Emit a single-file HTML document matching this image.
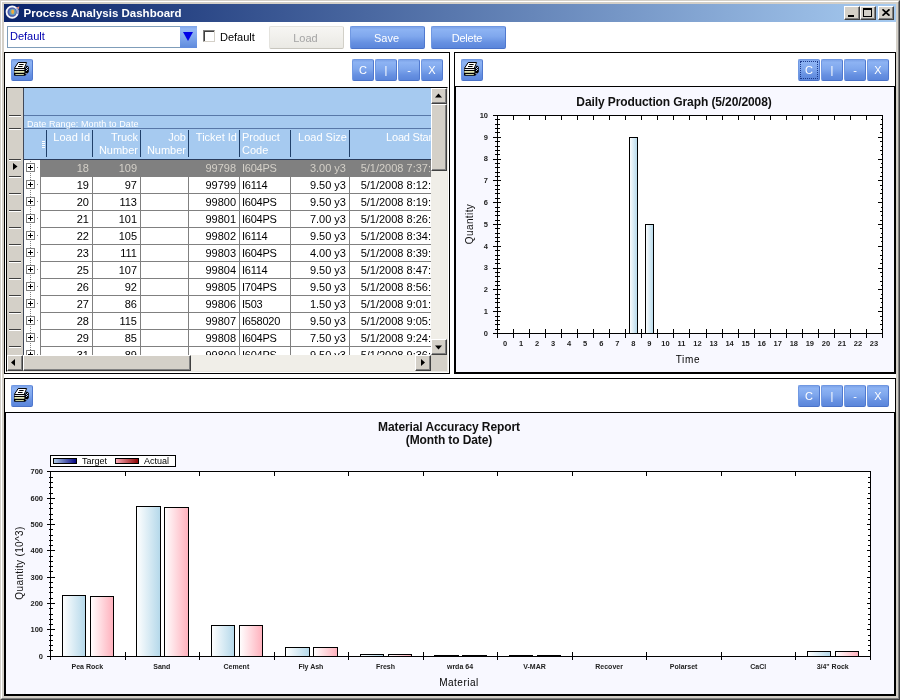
<!DOCTYPE html><html><head><meta charset="utf-8"><title>Process Analysis Dashboard</title><style>
html,body{margin:0;padding:0;}
html{background:#d4d0c8;}
body{will-change:transform;}
body{width:900px;height:700px;overflow:hidden;background:#d4d0c8;position:relative;font-family:"Liberation Sans",sans-serif;font-size:11px;color:#000;}
.a{position:absolute;}
.t{position:absolute;white-space:nowrap;line-height:1;}
#frame{left:0;top:0;width:900px;height:700px;background:#d4d0c8;box-sizing:border-box;border:1px solid;border-color:#d4d0c8 #404040 #404040 #d4d0c8;}
#frame2{left:1px;top:1px;width:898px;height:698px;box-sizing:border-box;border:1px solid;border-color:#fff #808080 #808080 #fff;}
#title{left:4px;top:4px;width:892px;height:18px;background:linear-gradient(to right,#0a246a 0%,#a6caf0 100%);}
#client{left:4px;top:22px;width:892px;height:674px;background:#fff;}
.tb{position:absolute;width:16px;height:14px;box-sizing:border-box;background:#d4d0c8;border:1px solid;border-color:#fff #404040 #404040 #fff;box-shadow:inset -1px -1px 0 #808080;}
.btn{position:absolute;box-sizing:border-box;border-radius:2px;background:linear-gradient(to bottom,#7da3e8 0%,#8db3f3 12%,#7fa7ed 45%,#6690e1 75%,#5b86db 100%);color:#fff;text-align:center;border:1px solid;border-color:#7098e2 #5079cf #4a72c8 #7098e2;}
.sb{position:absolute;box-sizing:border-box;background:#d4d0c8;border:1px solid;border-color:#fff #404040 #404040 #fff;box-shadow:inset -1px -1px 0 #808080;}
.hl{position:absolute;height:1px;background:#808080;}
.vl{position:absolute;width:1px;background:#808080;}
.cell{position:absolute;white-space:nowrap;font-size:11px;line-height:16px;height:16px;overflow:hidden;}
.r{text-align:right;}
.hd{position:absolute;white-space:nowrap;font-size:11px;line-height:13px;color:#fff;}
svg text{font-family:"Liberation Sans",sans-serif;}
</style></head><body>
<div class="a" id="frame"></div><div class="a" id="frame2"></div>
<div class="a" id="title"></div>
<svg class="a" style="left:4px;top:4px" width="18" height="18" viewBox="0 0 18 18"><path d="M12.6 3.2 L15.4 2.6 L14.6 5.4 Z" fill="#e08a78"/><circle cx="8.3" cy="8.1" r="4.6" fill="#4c5cb0"/><circle cx="8.6" cy="8" r="3.3" fill="#64a0b8"/><ellipse cx="8.7" cy="7.8" rx="1.5" ry="2.3" fill="#f4ac3c"/><circle cx="8.2" cy="8.1" r="5.6" fill="none" stroke="#f4f4fa" stroke-width="1.9"/><path d="M12.4 4.4 A5.6 5.6 0 0 1 13.6 10" fill="none" stroke="#4c5cb0" stroke-width="1.2" opacity="0.55"/></svg>
<div class="t" style="left:23.5px;top:8px;font-size:11.5px;font-weight:bold;color:#fff;letter-spacing:0px" id="ttl">Process Analysis Dashboard</div>
<div class="tb" style="left:844px;top:6px"><div class="a" style="left:3px;top:8px;width:6px;height:2px;background:#000"></div></div>
<div class="tb" style="left:860px;top:6px"><div class="a" style="left:2px;top:1px;width:9px;height:9px;box-sizing:border-box;border:1px solid #000;border-top-width:2px"></div></div>
<div class="tb" style="left:878px;top:6px"><svg class="a" style="left:3px;top:2px" width="9" height="7" viewBox="0 0 9 7"><path d="M0.5 0.3 L7.5 6.7 M7.5 0.3 L0.5 6.7" stroke="#000" stroke-width="1.7"/></svg></div>
<div class="a" id="client"></div>
<div class="a" style="left:7px;top:26px;width:190px;height:22px;box-sizing:border-box;border:1px solid #7f9db9;background:#fff"></div>
<div class="t" style="left:10px;top:31px;font-size:11px;color:#0000b0">Default</div>
<div class="a" style="left:180px;top:26px;width:17px;height:22px;background:linear-gradient(to bottom,#7da3e8 0%,#95b8f4 14%,#7fa7ed 50%,#5f8adc 100%);"></div>
<svg class="a" style="left:183px;top:32px" width="10" height="9" viewBox="0 0 10 9"><path d="M0 0 H10 L5 9 Z" fill="#0000e6"/></svg>
<div class="a" style="left:203px;top:30px;width:12px;height:12px;box-sizing:border-box;background:#fff;border:1px solid;border-color:#808080 #d4d0c8 #d4d0c8 #808080;box-shadow:inset 1px 1px 0 #404040"></div>
<div class="t" style="left:220px;top:32px;font-size:11px">Default</div>
<div class="a" style="left:269px;top:26px;width:75px;height:23px;box-sizing:border-box;border-radius:2px;background:linear-gradient(to bottom,#f7f6f3,#eae9e4);border:1px solid;border-color:#e4e3de #d2d0c8 #c8c6be #e4e3de;color:#a4a4a4;text-align:center;line-height:22px;font-size:11px;padding-right:2px">Load</div>
<div class="btn" style="left:350px;top:26px;width:75px;height:23px;line-height:22px;font-size:11px;padding-right:2px">Save</div>
<div class="btn" style="left:431px;top:26px;width:75px;height:23px;line-height:22px;font-size:11px;padding-right:3px;letter-spacing:-0.2px">Delete</div>
<div class="a" style="left:4px;top:52px;width:446px;height:322px;box-sizing:border-box;border:1px solid #000;background:#fff"></div>
<div class="btn" style="left:11px;top:59px;width:22px;height:22px"><svg class="a" style="left:-1px;top:-1px" width="22" height="22" viewBox="0 0 22 22"><path d="M3.6 9 L7.2 3.5 H15.6 L13.4 9" fill="#fff" stroke="#000" stroke-width="1"/><path d="M8.2 5.5 H12.6 M7 7.5 H11.6" stroke="#000" stroke-width="1"/><path d="M14.2 9 L15.8 6.3 L17.8 8 V13 L14.2 16.6 Z" fill="#000"/><rect x="3" y="9" width="11.6" height="7.8" rx="0.8" fill="#000"/><rect x="3.6" y="10" width="9.8" height="1" fill="#e4e6ea"/><rect x="3.4" y="12" width="10" height="1.8" fill="#e2e6b4"/><rect x="4.4" y="15" width="8.4" height="0.9" fill="#dfe6a6"/><rect x="15" y="9" width="1" height="1" fill="#b8c8f0"/><rect x="16" y="10" width="1" height="1" fill="#b8c8f0"/><rect x="15" y="11" width="1" height="1" fill="#b8c8f0"/><rect x="16" y="8" width="1" height="1" fill="#b8c8f0"/><rect x="14.6" y="14" width="1" height="1" fill="#dfe6f8"/></svg></div>
<div class="btn" style="left:352px;top:59px;width:22px;height:22px;line-height:20px;font-size:11px">C</div>
<div class="btn" style="left:375px;top:59px;width:22px;height:22px;line-height:20px;font-size:11px">|</div>
<div class="btn" style="left:398px;top:59px;width:22px;height:22px;line-height:20px;font-size:11px">-</div>
<div class="btn" style="left:421px;top:59px;width:22px;height:22px;line-height:20px;font-size:11px">X</div>
<div class="a" style="left:6px;top:87px;width:442px;height:285px;box-sizing:border-box;border:1px solid;border-color:#000 #eceae4 #eceae4 #000;background:#fff;overflow:hidden" id="grid">
<div class="a" style="left:0;top:0;width:16px;height:268px;background:#d4d0c8"></div><div class="a" style="left:16px;top:0;width:1px;height:268px;background:#404858"></div>
<div class="a" style="left:17px;top:0;width:407px;height:72px;background:#a6caf0"></div>
<div class="a" style="left:17px;top:27px;width:407px;height:1px;background:#5878a8"></div>
<div class="a" style="left:17px;top:40px;width:407px;height:1px;background:#5878a8"></div>
<div class="a" style="left:17px;top:71px;width:407px;height:1px;background:#2a3c5c"></div>
<div class="t" style="left:20px;top:32px;font-size:9px;color:#fff;letter-spacing:0.08px">Date Range: Month to Date</div>
<div class="a" style="left:39px;top:42px;width:1px;height:27px;background:#20406a"></div>
<div class="a" style="left:85px;top:42px;width:1px;height:27px;background:#20406a"></div>
<div class="a" style="left:133px;top:42px;width:1px;height:27px;background:#20406a"></div>
<div class="a" style="left:181px;top:42px;width:1px;height:27px;background:#20406a"></div>
<div class="a" style="left:232px;top:42px;width:1px;height:27px;background:#20406a"></div>
<div class="a" style="left:283px;top:42px;width:1px;height:27px;background:#20406a"></div>
<div class="a" style="left:342px;top:42px;width:1px;height:27px;background:#20406a"></div>
<div class="a" style="left:35px;top:53px;width:3px;height:1px;background:#fff;box-shadow:0 2px 0 #fff,0 4px 0 #fff,0 6px 0 #fff"></div>
<div class="hd" style="left:41px;top:43px;width:42px;text-align:right;">Load Id</div>
<div class="hd" style="left:87px;top:43px;width:44px;text-align:right;">Truck<br>Number</div>
<div class="hd" style="left:135px;top:43px;width:44px;text-align:right;">Job<br>Number</div>
<div class="hd" style="left:183px;top:43px;width:47px;text-align:right;">Ticket Id</div>
<div class="hd" style="left:235px;top:43px;width:46px;text-align:left;">Product<br>Code</div>
<div class="hd" style="left:285px;top:43px;width:55px;text-align:right;">Load Size</div>
<div class="hd" style="left:344px;top:43px;width:81px;text-align:right;"><span style="letter-spacing:-0.2px">Load Star</span></div>
<div class="a" style="left:2px;top:27px;width:12px;height:1px;background:#404040;box-shadow:0 1px 0 #fff"></div>
<div class="a" style="left:2px;top:40px;width:12px;height:1px;background:#404040;box-shadow:0 1px 0 #fff"></div>
<div class="a" style="left:2px;top:71px;width:12px;height:1px;background:#404040;box-shadow:0 1px 0 #fff"></div>
<div class="a" style="left:33px;top:72px;width:391px;height:17px;background:#808080"></div>
<div class="cell r" style="left:33px;top:72px;width:52px;box-sizing:border-box;padding-right:3px;color:#d4d0c8;">18</div>
<div class="cell r" style="left:86px;top:72px;width:47px;box-sizing:border-box;padding-right:3px;color:#d4d0c8;">109</div>
<div class="cell r" style="left:134px;top:72px;width:47px;box-sizing:border-box;padding-right:3px;color:#d4d0c8;"></div>
<div class="cell r" style="left:182px;top:72px;width:50px;box-sizing:border-box;padding-right:3px;color:#d4d0c8;">99798</div>
<div class="cell " style="left:233px;top:72px;width:50px;box-sizing:border-box;padding-left:2px;color:#d4d0c8;letter-spacing:-0.25px;">I604PS</div>
<div class="cell r" style="left:284px;top:72px;width:58px;box-sizing:border-box;padding-right:3px;color:#d4d0c8;">3.00 y3</div>
<div class="cell r" style="left:343px;top:72px;width:84px;box-sizing:border-box;padding-right:3px;color:#d4d0c8;">5/1/2008 7:37:</div>
<div class="hl" style="left:33px;top:88px;width:391px"></div>
<div class="a" style="left:2px;top:88px;width:12px;height:1px;background:#404040;box-shadow:0 1px 0 #fff"></div>
<div class="a" style="left:19px;top:75px;width:9px;height:9px;box-sizing:border-box;border:1px solid #808080;background:#fff"><div class="a" style="left:1px;top:3px;width:5px;height:1px;background:#000"></div><div class="a" style="left:3px;top:1px;width:1px;height:5px;background:#000"></div></div>
<div class="a" style="left:23px;top:85px;width:1px;height:1px;background:#808080;box-shadow:0 2px 0 #808080,0 4px 0 #808080,0 6px 0 #808080"></div>
<div class="a" style="left:30px;top:79px;width:1px;height:1px;background:#808080"></div>
<div class="cell r" style="left:33px;top:89px;width:52px;box-sizing:border-box;padding-right:3px;">19</div>
<div class="cell r" style="left:86px;top:89px;width:47px;box-sizing:border-box;padding-right:3px;">97</div>
<div class="cell r" style="left:134px;top:89px;width:47px;box-sizing:border-box;padding-right:3px;"></div>
<div class="cell r" style="left:182px;top:89px;width:50px;box-sizing:border-box;padding-right:3px;">99799</div>
<div class="cell " style="left:233px;top:89px;width:50px;box-sizing:border-box;padding-left:2px;letter-spacing:-0.25px;">I6114</div>
<div class="cell r" style="left:284px;top:89px;width:58px;box-sizing:border-box;padding-right:3px;">9.50 y3</div>
<div class="cell r" style="left:343px;top:89px;width:84px;box-sizing:border-box;padding-right:3px;">5/1/2008 8:12:</div>
<div class="hl" style="left:33px;top:105px;width:391px"></div>
<div class="a" style="left:2px;top:105px;width:12px;height:1px;background:#404040;box-shadow:0 1px 0 #fff"></div>
<div class="a" style="left:19px;top:92px;width:9px;height:9px;box-sizing:border-box;border:1px solid #808080;background:#fff"><div class="a" style="left:1px;top:3px;width:5px;height:1px;background:#000"></div><div class="a" style="left:3px;top:1px;width:1px;height:5px;background:#000"></div></div>
<div class="a" style="left:23px;top:102px;width:1px;height:1px;background:#808080;box-shadow:0 2px 0 #808080,0 4px 0 #808080,0 6px 0 #808080"></div>
<div class="a" style="left:30px;top:96px;width:1px;height:1px;background:#808080"></div>
<div class="cell r" style="left:33px;top:106px;width:52px;box-sizing:border-box;padding-right:3px;">20</div>
<div class="cell r" style="left:86px;top:106px;width:47px;box-sizing:border-box;padding-right:3px;">113</div>
<div class="cell r" style="left:134px;top:106px;width:47px;box-sizing:border-box;padding-right:3px;"></div>
<div class="cell r" style="left:182px;top:106px;width:50px;box-sizing:border-box;padding-right:3px;">99800</div>
<div class="cell " style="left:233px;top:106px;width:50px;box-sizing:border-box;padding-left:2px;letter-spacing:-0.25px;">I604PS</div>
<div class="cell r" style="left:284px;top:106px;width:58px;box-sizing:border-box;padding-right:3px;">9.50 y3</div>
<div class="cell r" style="left:343px;top:106px;width:84px;box-sizing:border-box;padding-right:3px;">5/1/2008 8:19:</div>
<div class="hl" style="left:33px;top:122px;width:391px"></div>
<div class="a" style="left:2px;top:122px;width:12px;height:1px;background:#404040;box-shadow:0 1px 0 #fff"></div>
<div class="a" style="left:19px;top:109px;width:9px;height:9px;box-sizing:border-box;border:1px solid #808080;background:#fff"><div class="a" style="left:1px;top:3px;width:5px;height:1px;background:#000"></div><div class="a" style="left:3px;top:1px;width:1px;height:5px;background:#000"></div></div>
<div class="a" style="left:23px;top:119px;width:1px;height:1px;background:#808080;box-shadow:0 2px 0 #808080,0 4px 0 #808080,0 6px 0 #808080"></div>
<div class="a" style="left:30px;top:113px;width:1px;height:1px;background:#808080"></div>
<div class="cell r" style="left:33px;top:123px;width:52px;box-sizing:border-box;padding-right:3px;">21</div>
<div class="cell r" style="left:86px;top:123px;width:47px;box-sizing:border-box;padding-right:3px;">101</div>
<div class="cell r" style="left:134px;top:123px;width:47px;box-sizing:border-box;padding-right:3px;"></div>
<div class="cell r" style="left:182px;top:123px;width:50px;box-sizing:border-box;padding-right:3px;">99801</div>
<div class="cell " style="left:233px;top:123px;width:50px;box-sizing:border-box;padding-left:2px;letter-spacing:-0.25px;">I604PS</div>
<div class="cell r" style="left:284px;top:123px;width:58px;box-sizing:border-box;padding-right:3px;">7.00 y3</div>
<div class="cell r" style="left:343px;top:123px;width:84px;box-sizing:border-box;padding-right:3px;">5/1/2008 8:26:</div>
<div class="hl" style="left:33px;top:139px;width:391px"></div>
<div class="a" style="left:2px;top:139px;width:12px;height:1px;background:#404040;box-shadow:0 1px 0 #fff"></div>
<div class="a" style="left:19px;top:126px;width:9px;height:9px;box-sizing:border-box;border:1px solid #808080;background:#fff"><div class="a" style="left:1px;top:3px;width:5px;height:1px;background:#000"></div><div class="a" style="left:3px;top:1px;width:1px;height:5px;background:#000"></div></div>
<div class="a" style="left:23px;top:136px;width:1px;height:1px;background:#808080;box-shadow:0 2px 0 #808080,0 4px 0 #808080,0 6px 0 #808080"></div>
<div class="a" style="left:30px;top:130px;width:1px;height:1px;background:#808080"></div>
<div class="cell r" style="left:33px;top:140px;width:52px;box-sizing:border-box;padding-right:3px;">22</div>
<div class="cell r" style="left:86px;top:140px;width:47px;box-sizing:border-box;padding-right:3px;">105</div>
<div class="cell r" style="left:134px;top:140px;width:47px;box-sizing:border-box;padding-right:3px;"></div>
<div class="cell r" style="left:182px;top:140px;width:50px;box-sizing:border-box;padding-right:3px;">99802</div>
<div class="cell " style="left:233px;top:140px;width:50px;box-sizing:border-box;padding-left:2px;letter-spacing:-0.25px;">I6114</div>
<div class="cell r" style="left:284px;top:140px;width:58px;box-sizing:border-box;padding-right:3px;">9.50 y3</div>
<div class="cell r" style="left:343px;top:140px;width:84px;box-sizing:border-box;padding-right:3px;">5/1/2008 8:34:</div>
<div class="hl" style="left:33px;top:156px;width:391px"></div>
<div class="a" style="left:2px;top:156px;width:12px;height:1px;background:#404040;box-shadow:0 1px 0 #fff"></div>
<div class="a" style="left:19px;top:143px;width:9px;height:9px;box-sizing:border-box;border:1px solid #808080;background:#fff"><div class="a" style="left:1px;top:3px;width:5px;height:1px;background:#000"></div><div class="a" style="left:3px;top:1px;width:1px;height:5px;background:#000"></div></div>
<div class="a" style="left:23px;top:153px;width:1px;height:1px;background:#808080;box-shadow:0 2px 0 #808080,0 4px 0 #808080,0 6px 0 #808080"></div>
<div class="a" style="left:30px;top:147px;width:1px;height:1px;background:#808080"></div>
<div class="cell r" style="left:33px;top:157px;width:52px;box-sizing:border-box;padding-right:3px;">23</div>
<div class="cell r" style="left:86px;top:157px;width:47px;box-sizing:border-box;padding-right:3px;">111</div>
<div class="cell r" style="left:134px;top:157px;width:47px;box-sizing:border-box;padding-right:3px;"></div>
<div class="cell r" style="left:182px;top:157px;width:50px;box-sizing:border-box;padding-right:3px;">99803</div>
<div class="cell " style="left:233px;top:157px;width:50px;box-sizing:border-box;padding-left:2px;letter-spacing:-0.25px;">I604PS</div>
<div class="cell r" style="left:284px;top:157px;width:58px;box-sizing:border-box;padding-right:3px;">4.00 y3</div>
<div class="cell r" style="left:343px;top:157px;width:84px;box-sizing:border-box;padding-right:3px;">5/1/2008 8:39:</div>
<div class="hl" style="left:33px;top:173px;width:391px"></div>
<div class="a" style="left:2px;top:173px;width:12px;height:1px;background:#404040;box-shadow:0 1px 0 #fff"></div>
<div class="a" style="left:19px;top:160px;width:9px;height:9px;box-sizing:border-box;border:1px solid #808080;background:#fff"><div class="a" style="left:1px;top:3px;width:5px;height:1px;background:#000"></div><div class="a" style="left:3px;top:1px;width:1px;height:5px;background:#000"></div></div>
<div class="a" style="left:23px;top:170px;width:1px;height:1px;background:#808080;box-shadow:0 2px 0 #808080,0 4px 0 #808080,0 6px 0 #808080"></div>
<div class="a" style="left:30px;top:164px;width:1px;height:1px;background:#808080"></div>
<div class="cell r" style="left:33px;top:174px;width:52px;box-sizing:border-box;padding-right:3px;">25</div>
<div class="cell r" style="left:86px;top:174px;width:47px;box-sizing:border-box;padding-right:3px;">107</div>
<div class="cell r" style="left:134px;top:174px;width:47px;box-sizing:border-box;padding-right:3px;"></div>
<div class="cell r" style="left:182px;top:174px;width:50px;box-sizing:border-box;padding-right:3px;">99804</div>
<div class="cell " style="left:233px;top:174px;width:50px;box-sizing:border-box;padding-left:2px;letter-spacing:-0.25px;">I6114</div>
<div class="cell r" style="left:284px;top:174px;width:58px;box-sizing:border-box;padding-right:3px;">9.50 y3</div>
<div class="cell r" style="left:343px;top:174px;width:84px;box-sizing:border-box;padding-right:3px;">5/1/2008 8:47:</div>
<div class="hl" style="left:33px;top:190px;width:391px"></div>
<div class="a" style="left:2px;top:190px;width:12px;height:1px;background:#404040;box-shadow:0 1px 0 #fff"></div>
<div class="a" style="left:19px;top:177px;width:9px;height:9px;box-sizing:border-box;border:1px solid #808080;background:#fff"><div class="a" style="left:1px;top:3px;width:5px;height:1px;background:#000"></div><div class="a" style="left:3px;top:1px;width:1px;height:5px;background:#000"></div></div>
<div class="a" style="left:23px;top:187px;width:1px;height:1px;background:#808080;box-shadow:0 2px 0 #808080,0 4px 0 #808080,0 6px 0 #808080"></div>
<div class="a" style="left:30px;top:181px;width:1px;height:1px;background:#808080"></div>
<div class="cell r" style="left:33px;top:191px;width:52px;box-sizing:border-box;padding-right:3px;">26</div>
<div class="cell r" style="left:86px;top:191px;width:47px;box-sizing:border-box;padding-right:3px;">92</div>
<div class="cell r" style="left:134px;top:191px;width:47px;box-sizing:border-box;padding-right:3px;"></div>
<div class="cell r" style="left:182px;top:191px;width:50px;box-sizing:border-box;padding-right:3px;">99805</div>
<div class="cell " style="left:233px;top:191px;width:50px;box-sizing:border-box;padding-left:2px;letter-spacing:-0.25px;">I704PS</div>
<div class="cell r" style="left:284px;top:191px;width:58px;box-sizing:border-box;padding-right:3px;">9.50 y3</div>
<div class="cell r" style="left:343px;top:191px;width:84px;box-sizing:border-box;padding-right:3px;">5/1/2008 8:56:</div>
<div class="hl" style="left:33px;top:207px;width:391px"></div>
<div class="a" style="left:2px;top:207px;width:12px;height:1px;background:#404040;box-shadow:0 1px 0 #fff"></div>
<div class="a" style="left:19px;top:194px;width:9px;height:9px;box-sizing:border-box;border:1px solid #808080;background:#fff"><div class="a" style="left:1px;top:3px;width:5px;height:1px;background:#000"></div><div class="a" style="left:3px;top:1px;width:1px;height:5px;background:#000"></div></div>
<div class="a" style="left:23px;top:204px;width:1px;height:1px;background:#808080;box-shadow:0 2px 0 #808080,0 4px 0 #808080,0 6px 0 #808080"></div>
<div class="a" style="left:30px;top:198px;width:1px;height:1px;background:#808080"></div>
<div class="cell r" style="left:33px;top:208px;width:52px;box-sizing:border-box;padding-right:3px;">27</div>
<div class="cell r" style="left:86px;top:208px;width:47px;box-sizing:border-box;padding-right:3px;">86</div>
<div class="cell r" style="left:134px;top:208px;width:47px;box-sizing:border-box;padding-right:3px;"></div>
<div class="cell r" style="left:182px;top:208px;width:50px;box-sizing:border-box;padding-right:3px;">99806</div>
<div class="cell " style="left:233px;top:208px;width:50px;box-sizing:border-box;padding-left:2px;letter-spacing:-0.25px;">I503</div>
<div class="cell r" style="left:284px;top:208px;width:58px;box-sizing:border-box;padding-right:3px;">1.50 y3</div>
<div class="cell r" style="left:343px;top:208px;width:84px;box-sizing:border-box;padding-right:3px;">5/1/2008 9:01:</div>
<div class="hl" style="left:33px;top:224px;width:391px"></div>
<div class="a" style="left:2px;top:224px;width:12px;height:1px;background:#404040;box-shadow:0 1px 0 #fff"></div>
<div class="a" style="left:19px;top:211px;width:9px;height:9px;box-sizing:border-box;border:1px solid #808080;background:#fff"><div class="a" style="left:1px;top:3px;width:5px;height:1px;background:#000"></div><div class="a" style="left:3px;top:1px;width:1px;height:5px;background:#000"></div></div>
<div class="a" style="left:23px;top:221px;width:1px;height:1px;background:#808080;box-shadow:0 2px 0 #808080,0 4px 0 #808080,0 6px 0 #808080"></div>
<div class="a" style="left:30px;top:215px;width:1px;height:1px;background:#808080"></div>
<div class="cell r" style="left:33px;top:225px;width:52px;box-sizing:border-box;padding-right:3px;">28</div>
<div class="cell r" style="left:86px;top:225px;width:47px;box-sizing:border-box;padding-right:3px;">115</div>
<div class="cell r" style="left:134px;top:225px;width:47px;box-sizing:border-box;padding-right:3px;"></div>
<div class="cell r" style="left:182px;top:225px;width:50px;box-sizing:border-box;padding-right:3px;">99807</div>
<div class="cell " style="left:233px;top:225px;width:50px;box-sizing:border-box;padding-left:2px;letter-spacing:-0.25px;">I658020</div>
<div class="cell r" style="left:284px;top:225px;width:58px;box-sizing:border-box;padding-right:3px;">9.50 y3</div>
<div class="cell r" style="left:343px;top:225px;width:84px;box-sizing:border-box;padding-right:3px;">5/1/2008 9:05:</div>
<div class="hl" style="left:33px;top:241px;width:391px"></div>
<div class="a" style="left:2px;top:241px;width:12px;height:1px;background:#404040;box-shadow:0 1px 0 #fff"></div>
<div class="a" style="left:19px;top:228px;width:9px;height:9px;box-sizing:border-box;border:1px solid #808080;background:#fff"><div class="a" style="left:1px;top:3px;width:5px;height:1px;background:#000"></div><div class="a" style="left:3px;top:1px;width:1px;height:5px;background:#000"></div></div>
<div class="a" style="left:23px;top:238px;width:1px;height:1px;background:#808080;box-shadow:0 2px 0 #808080,0 4px 0 #808080,0 6px 0 #808080"></div>
<div class="a" style="left:30px;top:232px;width:1px;height:1px;background:#808080"></div>
<div class="cell r" style="left:33px;top:242px;width:52px;box-sizing:border-box;padding-right:3px;">29</div>
<div class="cell r" style="left:86px;top:242px;width:47px;box-sizing:border-box;padding-right:3px;">85</div>
<div class="cell r" style="left:134px;top:242px;width:47px;box-sizing:border-box;padding-right:3px;"></div>
<div class="cell r" style="left:182px;top:242px;width:50px;box-sizing:border-box;padding-right:3px;">99808</div>
<div class="cell " style="left:233px;top:242px;width:50px;box-sizing:border-box;padding-left:2px;letter-spacing:-0.25px;">I604PS</div>
<div class="cell r" style="left:284px;top:242px;width:58px;box-sizing:border-box;padding-right:3px;">7.50 y3</div>
<div class="cell r" style="left:343px;top:242px;width:84px;box-sizing:border-box;padding-right:3px;">5/1/2008 9:24:</div>
<div class="hl" style="left:33px;top:258px;width:391px"></div>
<div class="a" style="left:2px;top:258px;width:12px;height:1px;background:#404040;box-shadow:0 1px 0 #fff"></div>
<div class="a" style="left:19px;top:245px;width:9px;height:9px;box-sizing:border-box;border:1px solid #808080;background:#fff"><div class="a" style="left:1px;top:3px;width:5px;height:1px;background:#000"></div><div class="a" style="left:3px;top:1px;width:1px;height:5px;background:#000"></div></div>
<div class="a" style="left:23px;top:255px;width:1px;height:1px;background:#808080;box-shadow:0 2px 0 #808080,0 4px 0 #808080,0 6px 0 #808080"></div>
<div class="a" style="left:30px;top:249px;width:1px;height:1px;background:#808080"></div>
<div class="cell r" style="left:33px;top:259px;width:52px;box-sizing:border-box;padding-right:3px;">31</div>
<div class="cell r" style="left:86px;top:259px;width:47px;box-sizing:border-box;padding-right:3px;">89</div>
<div class="cell r" style="left:134px;top:259px;width:47px;box-sizing:border-box;padding-right:3px;"></div>
<div class="cell r" style="left:182px;top:259px;width:50px;box-sizing:border-box;padding-right:3px;">99809</div>
<div class="cell " style="left:233px;top:259px;width:50px;box-sizing:border-box;padding-left:2px;letter-spacing:-0.25px;">I604PS</div>
<div class="cell r" style="left:284px;top:259px;width:58px;box-sizing:border-box;padding-right:3px;">9.50 y3</div>
<div class="cell r" style="left:343px;top:259px;width:84px;box-sizing:border-box;padding-right:3px;">5/1/2008 9:36:</div>
<div class="hl" style="left:33px;top:275px;width:391px"></div>
<div class="a" style="left:2px;top:275px;width:12px;height:1px;background:#404040;box-shadow:0 1px 0 #fff"></div>
<div class="a" style="left:19px;top:262px;width:9px;height:9px;box-sizing:border-box;border:1px solid #808080;background:#fff"><div class="a" style="left:1px;top:3px;width:5px;height:1px;background:#000"></div><div class="a" style="left:3px;top:1px;width:1px;height:5px;background:#000"></div></div>
<div class="a" style="left:23px;top:272px;width:1px;height:1px;background:#808080;box-shadow:0 2px 0 #808080,0 4px 0 #808080,0 6px 0 #808080"></div>
<div class="a" style="left:30px;top:266px;width:1px;height:1px;background:#808080"></div>
<div class="a" style="left:23px;top:73px;width:1px;height:1px;background:#808080"></div>
<div class="vl" style="left:85px;top:88px;height:179px"></div>
<div class="vl" style="left:133px;top:88px;height:179px"></div>
<div class="vl" style="left:181px;top:88px;height:179px"></div>
<div class="vl" style="left:232px;top:88px;height:179px"></div>
<div class="vl" style="left:283px;top:88px;height:179px"></div>
<div class="vl" style="left:342px;top:88px;height:179px"></div>
<div class="vl" style="left:33px;top:88px;height:179px"></div>
<svg class="a" style="left:6px;top:75px" width="5" height="7" viewBox="0 0 5 7"><path d="M0 0 L4.5 3.5 L0 7 Z" fill="#000"/></svg>
<div class="a" style="left:424px;top:0;width:16px;height:267px;background:#f0eee8"></div>
<div class="sb" style="left:424px;top:0;width:16px;height:16px"><svg class="a" style="left:3px;top:4px" width="8" height="5" viewBox="0 0 8 5"><path d="M0 4.5 L3.5 0.5 L7 4.5 Z" fill="#000"/></svg></div>
<div class="sb" style="left:424px;top:16px;width:16px;height:67px"></div>
<div class="sb" style="left:424px;top:251px;width:16px;height:16px"><svg class="a" style="left:3px;top:5px" width="8" height="5" viewBox="0 0 8 5"><path d="M0 0.5 L7 0.5 L3.5 4.5 Z" fill="#000"/></svg></div>
<div class="a" style="left:0;top:267px;width:424px;height:16px;background:#f0eee8"></div>
<div class="sb" style="left:0;top:267px;width:16px;height:16px"><svg class="a" style="left:3px;top:3px" width="5" height="8" viewBox="0 0 5 8"><path d="M4 0 L0 3.5 L4 7 Z" fill="#000"/></svg></div>
<div class="sb" style="left:16px;top:267px;width:168px;height:16px"></div>
<div class="sb" style="left:408px;top:267px;width:16px;height:16px"><svg class="a" style="left:5px;top:3px" width="5" height="8" viewBox="0 0 5 8"><path d="M0 0 L4 3.5 L0 7 Z" fill="#000"/></svg></div>
<div class="a" style="left:424px;top:267px;width:16px;height:16px;background:#d4d0c8"></div>
</div>
<div class="a" style="left:454px;top:52px;width:442px;height:322px;box-sizing:border-box;border:1px solid #000;background:#fff"></div>
<div class="btn" style="left:461px;top:59px;width:22px;height:22px"><svg class="a" style="left:-1px;top:-1px" width="22" height="22" viewBox="0 0 22 22"><path d="M3.6 9 L7.2 3.5 H15.6 L13.4 9" fill="#fff" stroke="#000" stroke-width="1"/><path d="M8.2 5.5 H12.6 M7 7.5 H11.6" stroke="#000" stroke-width="1"/><path d="M14.2 9 L15.8 6.3 L17.8 8 V13 L14.2 16.6 Z" fill="#000"/><rect x="3" y="9" width="11.6" height="7.8" rx="0.8" fill="#000"/><rect x="3.6" y="10" width="9.8" height="1" fill="#e4e6ea"/><rect x="3.4" y="12" width="10" height="1.8" fill="#e2e6b4"/><rect x="4.4" y="15" width="8.4" height="0.9" fill="#dfe6a6"/><rect x="15" y="9" width="1" height="1" fill="#b8c8f0"/><rect x="16" y="10" width="1" height="1" fill="#b8c8f0"/><rect x="15" y="11" width="1" height="1" fill="#b8c8f0"/><rect x="16" y="8" width="1" height="1" fill="#b8c8f0"/><rect x="14.6" y="14" width="1" height="1" fill="#dfe6f8"/></svg></div>
<div class="btn" style="left:798px;top:59px;width:22px;height:22px;line-height:20px;font-size:11px">C<div class="a" style="left:1px;top:1px;width:18px;height:18px;box-sizing:border-box;border:1px dotted #1c3a8a"></div></div>
<div class="btn" style="left:821px;top:59px;width:22px;height:22px;line-height:20px;font-size:11px">|</div>
<div class="btn" style="left:844px;top:59px;width:22px;height:22px;line-height:20px;font-size:11px">-</div>
<div class="btn" style="left:867px;top:59px;width:22px;height:22px;line-height:20px;font-size:11px">X</div>
<svg class="a" style="left:455px;top:86px" width="440" height="287" viewBox="0 0 440 287" shape-rendering="crispEdges"><defs><linearGradient id="gb" x1="0" x2="1" y1="0" y2="0"><stop offset="0" stop-color="#ffffff"/><stop offset="1" stop-color="#b4d8ea"/></linearGradient><linearGradient id="gp" x1="0" x2="1" y1="0" y2="0"><stop offset="0" stop-color="#ffffff"/><stop offset="1" stop-color="#ffb0bc"/></linearGradient><linearGradient id="lb" x1="0" x2="1" y1="0" y2="0"><stop offset="0" stop-color="#b4d0ea"/><stop offset="1" stop-color="#000080"/></linearGradient><linearGradient id="lp" x1="0" x2="1" y1="0" y2="0"><stop offset="0" stop-color="#ffb0bc"/><stop offset="1" stop-color="#8b0000"/></linearGradient></defs><rect x="0.5" y="0.5" width="439" height="286" fill="#f8f8ff" stroke="#000" stroke-width="1"/><rect x="42" y="29" width="385" height="218" fill="#fff"/><rect x="174.5" y="51.5" width="8.0" height="196.0" fill="url(#gb)" stroke="#000" stroke-width="1"/><rect x="190.5" y="138.5" width="8.0" height="109.0" fill="url(#gb)" stroke="#000" stroke-width="1"/><path d="M38 29.5 H428 M38 247.5 H428 M42.5 29 V252 M427.5 29 V252 M38 247.5 H46 M423 247.5 H428 M40 243.5 H45 M426 243.5 H428 M40 238.5 H45 M425 238.5 H428 M40 234.5 H45 M426 234.5 H428 M40 230.5 H45 M425 230.5 H428 M38 225.5 H46 M423 225.5 H428 M40 221.5 H45 M425 221.5 H428 M40 216.5 H45 M426 216.5 H428 M40 212.5 H45 M425 212.5 H428 M40 208.5 H45 M426 208.5 H428 M38 203.5 H46 M423 203.5 H428 M40 199.5 H45 M426 199.5 H428 M40 195.5 H45 M425 195.5 H428 M40 190.5 H45 M426 190.5 H428 M40 186.5 H45 M425 186.5 H428 M38 182.5 H46 M423 182.5 H428 M40 177.5 H45 M425 177.5 H428 M40 173.5 H45 M426 173.5 H428 M40 169.5 H45 M425 169.5 H428 M40 164.5 H45 M426 164.5 H428 M38 160.5 H46 M423 160.5 H428 M40 155.5 H45 M426 155.5 H428 M40 151.5 H45 M425 151.5 H428 M40 147.5 H45 M426 147.5 H428 M40 142.5 H45 M425 142.5 H428 M38 138.5 H46 M423 138.5 H428 M40 134.5 H45 M425 134.5 H428 M40 129.5 H45 M426 129.5 H428 M40 125.5 H45 M425 125.5 H428 M40 121.5 H45 M426 121.5 H428 M38 116.5 H46 M423 116.5 H428 M40 112.5 H45 M426 112.5 H428 M40 107.5 H45 M425 107.5 H428 M40 103.5 H45 M426 103.5 H428 M40 99.5 H45 M425 99.5 H428 M38 94.5 H46 M423 94.5 H428 M40 90.5 H45 M425 90.5 H428 M40 86.5 H45 M426 86.5 H428 M40 81.5 H45 M425 81.5 H428 M40 77.5 H45 M426 77.5 H428 M38 73.5 H46 M423 73.5 H428 M40 68.5 H45 M426 68.5 H428 M40 64.5 H45 M425 64.5 H428 M40 60.5 H45 M426 60.5 H428 M40 55.5 H45 M425 55.5 H428 M38 51.5 H46 M423 51.5 H428 M40 46.5 H45 M425 46.5 H428 M40 42.5 H45 M426 42.5 H428 M40 38.5 H45 M425 38.5 H428 M40 33.5 H45 M426 33.5 H428 M38 29.5 H46 M423 29.5 H428 M42.5 243 V252 M42.5 29 V34 M58.5 243 V252 M58.5 29 V34 M74.5 243 V252 M74.5 29 V34 M90.5 243 V252 M90.5 29 V34 M106.5 243 V252 M106.5 29 V34 M122.5 243 V252 M122.5 29 V34 M138.5 243 V252 M138.5 29 V34 M154.5 243 V252 M154.5 29 V34 M170.5 243 V252 M170.5 29 V34 M186.5 243 V252 M186.5 29 V34 M202.5 243 V252 M202.5 29 V34 M218.5 243 V252 M218.5 29 V34 M234.5 243 V252 M234.5 29 V34 M251.5 243 V252 M251.5 29 V34 M267.5 243 V252 M267.5 29 V34 M283.5 243 V252 M283.5 29 V34 M299.5 243 V252 M299.5 29 V34 M315.5 243 V252 M315.5 29 V34 M331.5 243 V252 M331.5 29 V34 M347.5 243 V252 M347.5 29 V34 M363.5 243 V252 M363.5 29 V34 M379.5 243 V252 M379.5 29 V34 M395.5 243 V252 M395.5 29 V34 M411.5 243 V252 M411.5 29 V34 M427.5 243 V252 M427.5 29 V34" stroke="#000" stroke-width="1" fill="none"/></svg>
<svg class="a" style="left:455px;top:86px" width="440" height="287" viewBox="0 0 440 287"><text x="219" y="20" text-anchor="middle" font-size="12" letter-spacing="-0.1" font-weight="bold" fill="#111">Daily Production Graph (5/20/2008)</text><text x="33" y="249.7" text-anchor="end" font-size="7.5" font-weight="bold" fill="#222">0</text><text x="33" y="227.9" text-anchor="end" font-size="7.5" font-weight="bold" fill="#222">1</text><text x="33" y="206.1" text-anchor="end" font-size="7.5" font-weight="bold" fill="#222">2</text><text x="33" y="184.3" text-anchor="end" font-size="7.5" font-weight="bold" fill="#222">3</text><text x="33" y="162.5" text-anchor="end" font-size="7.5" font-weight="bold" fill="#222">4</text><text x="33" y="140.7" text-anchor="end" font-size="7.5" font-weight="bold" fill="#222">5</text><text x="33" y="118.9" text-anchor="end" font-size="7.5" font-weight="bold" fill="#222">6</text><text x="33" y="97.1" text-anchor="end" font-size="7.5" font-weight="bold" fill="#222">7</text><text x="33" y="75.3" text-anchor="end" font-size="7.5" font-weight="bold" fill="#222">8</text><text x="33" y="53.5" text-anchor="end" font-size="7.5" font-weight="bold" fill="#222">9</text><text x="33" y="31.7" text-anchor="end" font-size="7.5" font-weight="bold" fill="#222">10</text><text x="50.0" y="260" text-anchor="middle" font-size="7.5" font-weight="bold" fill="#222">0</text><text x="66.1" y="260" text-anchor="middle" font-size="7.5" font-weight="bold" fill="#222">1</text><text x="82.1" y="260" text-anchor="middle" font-size="7.5" font-weight="bold" fill="#222">2</text><text x="98.1" y="260" text-anchor="middle" font-size="7.5" font-weight="bold" fill="#222">3</text><text x="114.2" y="260" text-anchor="middle" font-size="7.5" font-weight="bold" fill="#222">4</text><text x="130.2" y="260" text-anchor="middle" font-size="7.5" font-weight="bold" fill="#222">5</text><text x="146.3" y="260" text-anchor="middle" font-size="7.5" font-weight="bold" fill="#222">6</text><text x="162.3" y="260" text-anchor="middle" font-size="7.5" font-weight="bold" fill="#222">7</text><text x="178.4" y="260" text-anchor="middle" font-size="7.5" font-weight="bold" fill="#222">8</text><text x="194.4" y="260" text-anchor="middle" font-size="7.5" font-weight="bold" fill="#222">9</text><text x="210.4" y="260" text-anchor="middle" font-size="7.5" font-weight="bold" fill="#222">10</text><text x="226.5" y="260" text-anchor="middle" font-size="7.5" font-weight="bold" fill="#222">11</text><text x="242.5" y="260" text-anchor="middle" font-size="7.5" font-weight="bold" fill="#222">12</text><text x="258.6" y="260" text-anchor="middle" font-size="7.5" font-weight="bold" fill="#222">13</text><text x="274.6" y="260" text-anchor="middle" font-size="7.5" font-weight="bold" fill="#222">14</text><text x="290.6" y="260" text-anchor="middle" font-size="7.5" font-weight="bold" fill="#222">15</text><text x="306.7" y="260" text-anchor="middle" font-size="7.5" font-weight="bold" fill="#222">16</text><text x="322.7" y="260" text-anchor="middle" font-size="7.5" font-weight="bold" fill="#222">17</text><text x="338.8" y="260" text-anchor="middle" font-size="7.5" font-weight="bold" fill="#222">18</text><text x="354.8" y="260" text-anchor="middle" font-size="7.5" font-weight="bold" fill="#222">19</text><text x="370.9" y="260" text-anchor="middle" font-size="7.5" font-weight="bold" fill="#222">20</text><text x="386.9" y="260" text-anchor="middle" font-size="7.5" font-weight="bold" fill="#222">21</text><text x="402.9" y="260" text-anchor="middle" font-size="7.5" font-weight="bold" fill="#222">22</text><text x="419.0" y="260" text-anchor="middle" font-size="7.5" font-weight="bold" fill="#222">23</text><text x="233" y="277" text-anchor="middle" font-size="10" letter-spacing="0.7" fill="#000">Time</text><text transform="translate(18 138) rotate(-90)" text-anchor="middle" font-size="10" letter-spacing="0.4" fill="#111">Quantity</text></svg>
<div class="a" style="left:4px;top:378px;width:892px;height:318px;box-sizing:border-box;border:1px solid #000;background:#fff"></div>
<div class="btn" style="left:11px;top:385px;width:22px;height:22px"><svg class="a" style="left:-1px;top:-1px" width="22" height="22" viewBox="0 0 22 22"><path d="M3.6 9 L7.2 3.5 H15.6 L13.4 9" fill="#fff" stroke="#000" stroke-width="1"/><path d="M8.2 5.5 H12.6 M7 7.5 H11.6" stroke="#000" stroke-width="1"/><path d="M14.2 9 L15.8 6.3 L17.8 8 V13 L14.2 16.6 Z" fill="#000"/><rect x="3" y="9" width="11.6" height="7.8" rx="0.8" fill="#000"/><rect x="3.6" y="10" width="9.8" height="1" fill="#e4e6ea"/><rect x="3.4" y="12" width="10" height="1.8" fill="#e2e6b4"/><rect x="4.4" y="15" width="8.4" height="0.9" fill="#dfe6a6"/><rect x="15" y="9" width="1" height="1" fill="#b8c8f0"/><rect x="16" y="10" width="1" height="1" fill="#b8c8f0"/><rect x="15" y="11" width="1" height="1" fill="#b8c8f0"/><rect x="16" y="8" width="1" height="1" fill="#b8c8f0"/><rect x="14.6" y="14" width="1" height="1" fill="#dfe6f8"/></svg></div>
<div class="btn" style="left:798px;top:385px;width:22px;height:22px;line-height:20px;font-size:11px">C</div>
<div class="btn" style="left:821px;top:385px;width:22px;height:22px;line-height:20px;font-size:11px">|</div>
<div class="btn" style="left:844px;top:385px;width:22px;height:22px;line-height:20px;font-size:11px">-</div>
<div class="btn" style="left:867px;top:385px;width:22px;height:22px;line-height:20px;font-size:11px">X</div>
<svg class="a" style="left:5px;top:412px" width="890" height="283" viewBox="0 0 890 283" shape-rendering="crispEdges"><rect x="0.5" y="0.5" width="889" height="282" fill="#f8f8ff" stroke="#000" stroke-width="1"/><rect x="45" y="59" width="820" height="185" fill="#fff"/><rect x="57.5" y="183.5" width="23.0" height="61.0" fill="url(#gb)" stroke="#000" stroke-width="1"/><rect x="85.5" y="184.5" width="23.0" height="60.0" fill="url(#gp)" stroke="#000" stroke-width="1"/><rect x="131.5" y="94.5" width="24.0" height="150.0" fill="url(#gb)" stroke="#000" stroke-width="1"/><rect x="159.5" y="95.5" width="24.0" height="149.0" fill="url(#gp)" stroke="#000" stroke-width="1"/><rect x="206.5" y="213.5" width="23.0" height="31.0" fill="url(#gb)" stroke="#000" stroke-width="1"/><rect x="234.5" y="213.5" width="23.0" height="31.0" fill="url(#gp)" stroke="#000" stroke-width="1"/><rect x="280.5" y="235.5" width="24.0" height="9.0" fill="url(#gb)" stroke="#000" stroke-width="1"/><rect x="308.5" y="235.5" width="24.0" height="9.0" fill="url(#gp)" stroke="#000" stroke-width="1"/><rect x="355.5" y="242.5" width="23.0" height="2.0" fill="url(#gb)" stroke="#000" stroke-width="1"/><rect x="383.5" y="242.5" width="23.0" height="2.0" fill="url(#gp)" stroke="#000" stroke-width="1"/><rect x="429.5" y="243.5" width="24.0" height="1.0" fill="url(#gb)" stroke="#000" stroke-width="1"/><rect x="457.5" y="243.5" width="24.0" height="1.0" fill="url(#gp)" stroke="#000" stroke-width="1"/><rect x="504.5" y="243.5" width="23.0" height="1.0" fill="url(#gb)" stroke="#000" stroke-width="1"/><rect x="532.5" y="243.5" width="23.0" height="1.0" fill="url(#gp)" stroke="#000" stroke-width="1"/><rect x="802.5" y="239.5" width="23.0" height="5.0" fill="url(#gb)" stroke="#000" stroke-width="1"/><rect x="830.5" y="239.5" width="23.0" height="5.0" fill="url(#gp)" stroke="#000" stroke-width="1"/><path d="M42 59.5 H866 M42 244.5 H866 M45.5 59 V248 M865.5 59 V248 M42 244.5 H50 M862 244.5 H866 M44 238.5 H48 M863 238.5 H866 M44 233.5 H48 M863 233.5 H866 M44 228.5 H48 M863 228.5 H866 M44 223.5 H48 M863 223.5 H866 M42 217.5 H50 M862 217.5 H866 M44 212.5 H48 M863 212.5 H866 M44 207.5 H48 M863 207.5 H866 M44 202.5 H48 M863 202.5 H866 M44 196.5 H48 M863 196.5 H866 M42 191.5 H50 M862 191.5 H866 M44 186.5 H48 M863 186.5 H866 M44 180.5 H48 M863 180.5 H866 M44 175.5 H48 M863 175.5 H866 M44 170.5 H48 M863 170.5 H866 M42 165.5 H50 M862 165.5 H866 M44 159.5 H48 M863 159.5 H866 M44 154.5 H48 M863 154.5 H866 M44 149.5 H48 M863 149.5 H866 M44 144.5 H48 M863 144.5 H866 M42 138.5 H50 M862 138.5 H866 M44 133.5 H48 M863 133.5 H866 M44 128.5 H48 M863 128.5 H866 M44 123.5 H48 M863 123.5 H866 M44 117.5 H48 M863 117.5 H866 M42 112.5 H50 M862 112.5 H866 M44 107.5 H48 M863 107.5 H866 M44 102.5 H48 M863 102.5 H866 M44 96.5 H48 M863 96.5 H866 M44 91.5 H48 M863 91.5 H866 M42 86.5 H50 M862 86.5 H866 M44 81.5 H48 M863 81.5 H866 M44 75.5 H48 M863 75.5 H866 M44 70.5 H48 M863 70.5 H866 M44 65.5 H48 M863 65.5 H866 M42 59.5 H50 M862 59.5 H866 M45.5 240 V248 M45.5 59 V64 M120.5 240 V248 M120.5 59 V64 M194.5 240 V248 M194.5 59 V64 M269.5 240 V248 M269.5 59 V64 M343.5 240 V248 M343.5 59 V64 M418.5 240 V248 M418.5 59 V64 M492.5 240 V248 M492.5 59 V64 M567.5 240 V248 M567.5 59 V64 M641.5 240 V248 M641.5 59 V64 M716.5 240 V248 M716.5 59 V64 M790.5 240 V248 M790.5 59 V64 M865.5 240 V248 M865.5 59 V64" stroke="#000" stroke-width="1" fill="none"/><rect x="45.5" y="43.5" width="125" height="11" fill="#fff" stroke="#000" stroke-width="1"/><rect x="48.5" y="46.5" width="23" height="5" fill="url(#lb)" stroke="#000" stroke-width="1"/><rect x="110.5" y="46.5" width="23" height="5" fill="url(#lp)" stroke="#000" stroke-width="1"/></svg>
<svg class="a" style="left:5px;top:412px" width="890" height="283" viewBox="0 0 890 283"><text x="444" y="19" text-anchor="middle" font-size="12" letter-spacing="-0.1" font-weight="bold" fill="#111">Material Accuracy Report</text><text x="444" y="32" text-anchor="middle" font-size="12" letter-spacing="-0.1" font-weight="bold" fill="#111">(Month to Date)</text><text x="77" y="52" font-size="9" fill="#000">Target</text><text x="139" y="52" font-size="9" fill="#000">Actual</text><text x="38" y="246.5" text-anchor="end" font-size="7.5" font-weight="bold" fill="#222">0</text><text x="38" y="219.5" text-anchor="end" font-size="7.5" font-weight="bold" fill="#222">100</text><text x="38" y="193.5" text-anchor="end" font-size="7.5" font-weight="bold" fill="#222">200</text><text x="38" y="167.5" text-anchor="end" font-size="7.5" font-weight="bold" fill="#222">300</text><text x="38" y="140.5" text-anchor="end" font-size="7.5" font-weight="bold" fill="#222">400</text><text x="38" y="114.5" text-anchor="end" font-size="7.5" font-weight="bold" fill="#222">500</text><text x="38" y="88.5" text-anchor="end" font-size="7.5" font-weight="bold" fill="#222">600</text><text x="38" y="61.5" text-anchor="end" font-size="7.5" font-weight="bold" fill="#222">700</text><text x="82.3" y="257" text-anchor="middle" font-size="7" font-weight="bold" fill="#222">Pea Rock</text><text x="156.8" y="257" text-anchor="middle" font-size="7" font-weight="bold" fill="#222">Sand</text><text x="231.4" y="257" text-anchor="middle" font-size="7" font-weight="bold" fill="#222">Cement</text><text x="305.9" y="257" text-anchor="middle" font-size="7" font-weight="bold" fill="#222">Fly Ash</text><text x="380.5" y="257" text-anchor="middle" font-size="7" font-weight="bold" fill="#222">Fresh</text><text x="455.0" y="257" text-anchor="middle" font-size="7" font-weight="bold" fill="#222">wrda 64</text><text x="529.5" y="257" text-anchor="middle" font-size="7" font-weight="bold" fill="#222">V-MAR</text><text x="604.1" y="257" text-anchor="middle" font-size="7" font-weight="bold" fill="#222">Recover</text><text x="678.6" y="257" text-anchor="middle" font-size="7" font-weight="bold" fill="#222">Polarset</text><text x="753.2" y="257" text-anchor="middle" font-size="7" font-weight="bold" fill="#222">CaCl</text><text x="827.7" y="257" text-anchor="middle" font-size="7" font-weight="bold" fill="#222">3/4&quot; Rock</text><text x="454" y="274" text-anchor="middle" font-size="10" letter-spacing="0.5" fill="#000">Material</text><text transform="translate(18 151) rotate(-90)" text-anchor="middle" font-size="10" letter-spacing="0.35" fill="#111">Quantity (10^3)</text></svg>
</body></html>
